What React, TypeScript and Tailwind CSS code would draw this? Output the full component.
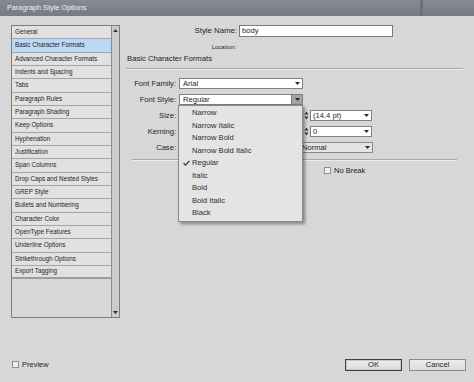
import React from "react";

const listItems = [
  "General",
  "Basic Character Formats",
  "Advanced Character Formats",
  "Indents and Spacing",
  "Tabs",
  "Paragraph Rules",
  "Paragraph Shading",
  "Keep Options",
  "Hyphenation",
  "Justification",
  "Span Columns",
  "Drop Caps and Nested Styles",
  "GREP Style",
  "Bullets and Numbering",
  "Character Color",
  "OpenType Features",
  "Underline Options",
  "Strikethrough Options",
  "Export Tagging",
];

const styles = [
  "Narrow",
  "Narrow Italic",
  "Narrow Bold",
  "Narrow Bold Italic",
  "Regular",
  "Italic",
  "Bold",
  "Bold Italic",
  "Black",
];

function Tri() {
  return (
    <svg width="5" height="3" viewBox="0 0 5 3">
      <path d="M0 0H5L2.5 3Z" fill="#2a2a2a" />
    </svg>
  );
}

function UpTri() {
  return (
    <svg width="5" height="3" viewBox="0 0 5 3">
      <path d="M0 3H5L2.5 0Z" fill="#3a3a3a" />
    </svg>
  );
}

function Spin() {
  return (
    <svg width="5" height="9" viewBox="0 0 5 9">
      <path d="M0.5 3.6H4.5L2.5 0.8Z M0.5 5.4H4.5L2.5 8.2Z" fill="#333" />
    </svg>
  );
}

function Check() {
  return (
    <svg width="7" height="6" viewBox="0 0 7 6">
      <path d="M0.6 3.2L2.5 5.1L6.4 0.8" stroke="#2a2a2a" strokeWidth="1.1" fill="none" />
    </svg>
  );
}

function Label({ children }: { children: React.ReactNode }) {
  return (
    <div className="w-[55px] shrink-0 text-right text-[7.6px] leading-none">{children}</div>
  );
}

export default function App() {
  return (
    <div className="w-[474px] h-[382px] bg-[#d7d7d7] flex flex-col overflow-hidden font-['Liberation_Sans',Arial,sans-serif] text-[#1e1e1e]">
      {/* Title bar */}
      <div className="h-[16px] shrink-0 bg-gradient-to-b from-[#868a95] to-[#767a85] flex items-stretch">
        <div className="pl-[7px] flex items-center text-[7.3px] text-[#f2f2f2]">Paragraph Style Options</div>
        <div className="ml-auto mr-[51px] w-[3px] bg-[#6c707a]" />
      </div>

      <div className="flex-1 flex">
        {/* Left column */}
        <div className="w-[121px] shrink-0 pl-[11px] pt-[9px] flex flex-col">
          <div className="w-[109px] h-[293px] border border-[#7d7d7d] bg-[#d8d8d8] flex">
            <div className="flex-1 flex flex-col">
              {listItems.map((t, i) => (
                <div
                  key={t}
                  className={
                    i === 1
                      ? "h-[13.33px] shrink-0 border-b border-[#a5a5a5] bg-[#bbd8f6] flex items-center pl-[3px] text-[6.3px] leading-none whitespace-nowrap"
                      : i === listItems.length - 1
                      ? "h-[13.33px] shrink-0 border-b-2 border-[#9c9c9c] bg-[#e1e1e1] flex items-center pl-[3px] text-[6.3px] leading-none whitespace-nowrap"
                      : "h-[13.33px] shrink-0 border-b border-[#a5a5a5] bg-[#e1e1e1] flex items-center pl-[3px] text-[6.3px] leading-none whitespace-nowrap"
                  }
                >
                  {t}
                </div>
              ))}
            </div>
            <div className="w-[8px] shrink-0 border-l border-[#8c8c8c] bg-[#cbcbcb] flex flex-col justify-between items-center py-[3px]">
              <UpTri />
              <Tri />
            </div>
          </div>
          <div className="mt-[43px] flex items-center gap-[3px] pl-[1px]">
            <div className="w-[7px] h-[7px] border border-[#8e8e8e] bg-[#f0f0f0]" />
            <span className="text-[7.5px] leading-none">Preview</span>
          </div>
        </div>

        {/* Right column */}
        <div className="flex-1 flex flex-col">
          {/* Style Name */}
          <div className="mt-[9px] h-[12px] flex items-center">
            <div className="w-[116px] text-right text-[7.8px] leading-none">Style Name:</div>
            <div className="ml-[2px] w-[154px] h-[12px] bg-white border border-[#7a7a7a] flex items-center pl-[2px] text-[7.6px] leading-none">
              body
            </div>
          </div>
          {/* Location */}
          <div className="mt-[5px] h-[10px] flex items-center">
            <div className="w-[115px] text-right text-[6px] leading-none">Location:</div>
          </div>
          {/* Heading */}
          <div className="mt-[2px] h-[10px] flex items-center pl-[6px] text-[7.7px] leading-none">
            Basic Character Formats
          </div>
          <div className="mt-[4px] ml-[5px] w-[337px] h-[1px] bg-[#a8a8a8] border-b border-[#ececec] box-content" />

          {/* Font Family */}
          <div className="mt-[8px] h-[11px] flex items-center">
            <Label>Font Family:</Label>
            <div className="ml-[3px] w-[124px] h-[11px] bg-white border border-[#7f7f7f] flex items-center">
              <span className="pl-[3px] text-[7.6px] leading-none flex-1">Arial</span>
              <div className="w-[10px] h-full flex items-center justify-center">
                <Tri />
              </div>
            </div>
          </div>

          {/* Font Style */}
          <div className="mt-[5px] h-[11px] flex items-center">
            <Label>Font Style:</Label>
            <div className="relative ml-[3px] w-[124px] h-[11px] bg-white border border-[#7f7f7f] flex items-center">
              <span className="pl-[3px] text-[7.6px] leading-none flex-1">Regular</span>
              <div className="w-[11px] h-full bg-[#a3a3a3] border-l border-[#7f7f7f] flex items-center justify-center">
                <Tri />
              </div>
              {/* Dropdown menu */}
              <div className="absolute left-[-2px] top-[10px] w-[125px] bg-[#e4e4e4] border border-[#8b8b8b] shadow-[2px_2px_3px_rgba(0,0,0,0.4)] pt-[1px] pb-[1px] z-10">
                {styles.map((s) => (
                  <div key={s} className="relative h-[12.5px] flex items-center pl-[13px] text-[7.6px] leading-none text-[#2b2b33]">
                    {s === "Regular" && (
                      <div className="absolute left-[4px] top-[3px]">
                        <Check />
                      </div>
                    )}
                    {s}
                  </div>
                ))}
              </div>
            </div>
          </div>

          {/* Size */}
          <div className="mt-[5px] h-[11px] flex items-center">
            <Label>Size:</Label>
            <div className="ml-[3px] w-[124px] h-[11px] flex items-center">
              <Spin />
              <div className="ml-[2px] w-[60px] h-[11px] bg-white border border-[#7f7f7f]" />
            </div>
            <div className="w-[7px] flex items-center justify-center">
              <Spin />
            </div>
            <div className="w-[62px] h-[11px] bg-white border border-[#7f7f7f] flex items-center">
              <span className="pl-[2px] flex-1 text-[7.6px] leading-none">(14.4 pt)</span>
              <div className="w-[9px] flex items-center justify-center">
                <Tri />
              </div>
            </div>
          </div>

          {/* Kerning */}
          <div className="mt-[5px] h-[11px] flex items-center">
            <Label>Kerning:</Label>
            <div className="ml-[3px] w-[124px] h-[11px] flex items-center">
              <Spin />
              <div className="ml-[2px] w-[60px] h-[11px] bg-white border border-[#7f7f7f]" />
            </div>
            <div className="w-[7px] flex items-center justify-center">
              <Spin />
            </div>
            <div className="w-[62px] h-[11px] bg-white border border-[#7f7f7f] flex items-center">
              <span className="pl-[2px] flex-1 text-[7.6px] leading-none">0</span>
              <div className="w-[9px] flex items-center justify-center">
                <Tri />
              </div>
            </div>
          </div>

          {/* Case */}
          <div className="mt-[5px] h-[11px] flex items-center">
            <Label>Case:</Label>
            <div className="ml-[3px] w-[70px] h-[11px] bg-[#e6e6e6] border border-[#8a8a8a]" />
            <div className="ml-[48px] w-[76px] h-[11px] bg-[#e4e4e4] border border-[#8a8a8a] flex items-center">
              <span className="pl-[4px] flex-1 text-[7.6px] leading-none">Normal</span>
              <div className="w-[9px] flex items-center justify-center">
                <Tri />
              </div>
            </div>
          </div>

          <div className="mt-[6px] ml-[11px] w-[325px] h-[1px] bg-[#a8a8a8] border-b border-[#ececec] box-content" />

          {/* No Break */}
          <div className="mt-[6px] h-[7px] flex items-center pl-[203px] gap-[3px]">
            <div className="w-[7px] h-[7px] border border-[#8e8e8e] bg-[#f0f0f0]" />
            <span className="text-[7.5px] leading-none">No Break</span>
          </div>

          {/* Buttons */}
          <div className="mt-auto mb-[11px] flex justify-end gap-[7px] pr-[8px]">
            <div className="w-[57px] h-[12px] border border-[#3f3f3f] bg-gradient-to-b from-[#ececec] to-[#dcdcdc] flex items-center justify-center text-[7.6px] leading-none shadow-[inset_0_0_0_1px_#c8c8c8]">
              OK
            </div>
            <div className="w-[57px] h-[12px] border border-[#8a8a8a] bg-gradient-to-b from-[#ececec] to-[#dcdcdc] flex items-center justify-center text-[7.6px] leading-none">
              Cancel
            </div>
          </div>
        </div>
      </div>
    </div>
  );
}
